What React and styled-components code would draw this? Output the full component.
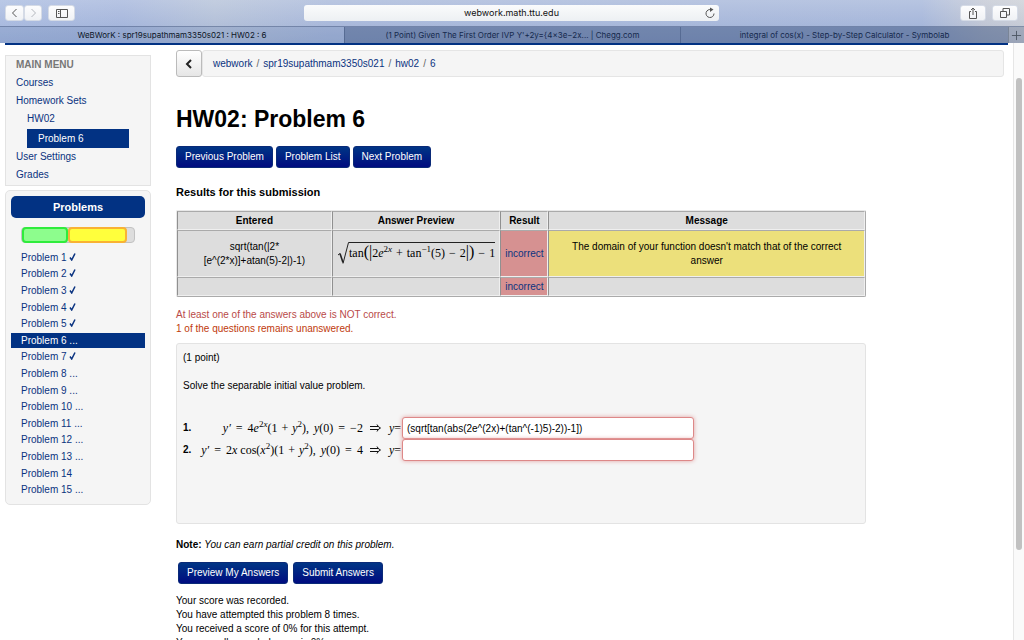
import React from "react";
import styled, { createGlobalStyle, css } from "styled-components";

const navy = "#023283";
const link = "#0a3380";

const GlobalStyle = createGlobalStyle`
  * {
    box-sizing: border-box;
  }
  body {
    margin: 0;
    background: #fff;
    color: #000;
    font-family: "Liberation Sans", Arial, sans-serif;
    font-size: 10px;
    line-height: 14px;
  }
  a {
    color: ${link};
    text-decoration: none;
  }
`;

const Window = styled.div`
  display: flex;
  flex-direction: column;
  height: 100vh;
  overflow: hidden;
`;

const Chrome = styled.header`
  flex: none;
  font-family: Inter, sans-serif;
  background: linear-gradient(rgba(255, 255, 255, 0.2), rgba(80, 110, 180, 0.12)),
    linear-gradient(
      90deg,
      #a9bbe0 0%,
      #a5b6dc 12%,
      #b4c1d8 21%,
      #a8b8da 32%,
      #a5b6da 90%,
      #c3c8d4 96%,
      #cccfd6 100%
    );
`;

const Toolbar = styled.div`
  display: grid;
  grid-template-columns: 1fr 41% 1fr;
  align-items: center;
  height: 26px;
  padding: 0 6px 0 5px;
`;

const ToolGroup = styled.div`
  display: flex;
  gap: ${props => props.gap || 0}px;
  justify-content: ${props => props.align || "flex-start"};
`;

const ToolButton = styled.button`
  display: flex;
  align-items: center;
  justify-content: center;
  width: ${props => props.w}px;
  height: 16px;
  padding: 0;
  color: ${props => (props.faded ? "#b4b8be" : "#555")};
  background: linear-gradient(#fdfdfe, #f0f2f5);
  border: 1px solid #d5dbe6;
  border-radius: 3px;
`;

const SidebarButton = styled(ToolButton)`
  margin-left: 6px;
`;

const AddressBar = styled.div`
  display: flex;
  align-items: center;
  height: 16px;
  padding: 0 3px 0 15px;
  color: #555;
  background: linear-gradient(#fafbfc, #edf0f3);
  border-radius: 3px;
`;

const Address = styled.input`
  flex: 1;
  min-width: 0;
  height: 14px;
  padding: 0;
  border: 0;
  background: none;
  color: #111;
  text-align: center;
  font: 9px/14px Inter, sans-serif;
`;

const Tabs = styled.nav`
  display: grid;
  grid-template-columns: 344fr 336fr 328fr 16px;
  grid-template-rows: 16px;
  height: 17px;
  border-top: 1px solid rgba(60, 80, 120, 0.5);
`;

const Tab = styled.a`
  overflow: hidden;
  text-align: center;
  white-space: nowrap;
  font-size: 8px;
  line-height: 16px;
  color: #15294d;
  background: rgba(50, 75, 120, 0.45);
  border-left: 1px solid rgba(50, 70, 110, 0.4);
  ${props =>
    props.current &&
    css`
      color: #0c1526;
      background: rgba(90, 115, 160, 0.18);
      border-left: 0;
    `}
`;

const NewTab = styled.button`
  display: flex;
  align-items: center;
  justify-content: center;
  padding: 0;
  border: 0;
  border-left: 1px solid #7a8597;
  background: rgba(80, 95, 125, 0.3);
  color: #4c5563;
`;

const Viewport = styled.div`
  flex: 1;
  display: flex;
  min-height: 0;
`;

const Page = styled.div`
  flex: 1;
  display: flex;
  gap: 25px;
  margin: 0 5px;
  padding-right: 4px;
  border-top: 2px solid ${navy};
`;

const ScrollTrack = styled.div`
  width: 11px;
  padding: 35px 2px 0;
  background: #fafafa;
  border-left: 1px solid #e6e6e6;
`;

const ScrollThumb = styled.div`
  height: 84%;
  border-radius: 4px;
  background: #c1c1c1;
`;

const Sidebar = styled.aside`
  flex: none;
  width: 146px;
  padding-top: 10px;
`;

const Menu = styled.ul`
  margin: 0 0 4px;
  padding: 0 0 1px;
  list-style: none;
  line-height: 18px;
  background: #f5f5f5;
  border: 1px solid #e3e3e3;
`;

const MenuTitle = styled.li`
  padding-left: 10px;
  font-weight: bold;
  color: #777;
`;

const MenuItem = styled.li`
  padding-left: ${props => (props.nested ? 21 : 10)}px;
`;

const MenuCurrent = styled.li`
  margin: 1px 21px 0;
  padding-left: 11px;
  line-height: 19px;
  background: ${navy};
  a {
    color: #fff;
  }
`;

const Problems = styled.section`
  padding: 5px 5px 6px;
  background: #f5f5f5;
  border: 1px solid #e3e3e3;
  border-radius: 5px;
`;

const ProblemsTitle = styled.h2`
  margin: 0 0 9px;
  border-radius: 5px;
  background: ${navy};
  color: #fff;
  text-align: center;
  font-size: 11px;
  line-height: 22px;
`;

const Progress = styled.div`
  display: flex;
  height: 16px;
  margin: 0 10px 6px;
  border: 1px solid #c2c2c2;
  border-radius: 4px;
  background: #ddd;
`;

const ProgressPart = styled.div`
  margin: -1px 0;
  border: 2px solid ${props => props.edge};
  border-radius: 4px;
  background: ${props => props.fill};
`;

const ProblemList = styled.ul`
  display: grid;
  grid-auto-rows: 1fr;
  align-items: center;
  height: 249px;
  margin: 0;
  padding: 0;
  list-style: none;
`;

const ProblemItem = styled.li`
  padding-left: 10px;
  line-height: 15px;
  background: ${props => (props.current ? navy : "none")};
  a {
    color: ${props => (props.current ? "#fff" : link)};
  }
`;

const Tick = styled.svg`
  width: 7px;
  height: 8px;
`;

const Main = styled.main`
  flex: 1;
  min-width: 0;
  padding-top: 5px;
`;

const TopRow = styled.div`
  display: flex;
  height: 27px;
`;

const BackButton = styled.button`
  display: flex;
  align-items: center;
  justify-content: center;
  width: 26px;
  padding: 0;
  color: #222;
  background: linear-gradient(#fff, #e6e6e6);
  border: 1px solid #bbb;
  border-radius: 3px;
`;

const Breadcrumb = styled.nav`
  flex: 1;
  display: flex;
  gap: 4px;
  padding-left: 10px;
  line-height: 25px;
  color: #666;
  background: #f5f5f5;
  border: 1px solid #e5e5e5;
  border-radius: 3px;
`;

const Body = styled.div`
  width: 83.33%;
`;

const Title = styled.h1`
  margin: 27px 0 12px;
  font-size: 23px;
  line-height: 30px;
`;

const Buttons = styled.div`
  display: flex;
  gap: ${props => props.gap}px;
  padding-left: ${props => props.indent || 0}px;
`;

const Button = styled.button`
  height: 22px;
  padding: 0 8px;
  color: #fff;
  font: inherit;
  background: linear-gradient(#003585, #000c80);
  border: 1px solid #0a2a78;
  border-radius: 3px;
`;

const Subtitle = styled.h3`
  margin: 17px 0 11px;
  font-size: 11px;
  line-height: 14px;
`;

const Results = styled.table`
  width: 100%;
  table-layout: fixed;
  border-spacing: 0;
  border: 1px solid;
  border-color: #e8e8e8 #aaa #aaa #e8e8e8;
  border-radius: 2px;
  background: #ddd;
  text-align: center;
`;

const cell = css`
  border: 1px solid;
  border-color: #aaa #efefef #efefef #909090;
`;

const HeadCell = styled.th`
  ${cell}
  height: 19px;
  padding: 0;
`;

const Cell = styled.td`
  ${cell}
  height: ${props => (props.tall ? 47 : 19)}px;
  padding: 0 ${props => props.inset || 0}px;
  background: ${props => props.fill || "none"};
`;

const Message = styled.p`
  margin: 0;
  color: ${props => props.tone};
`;

const Messages = styled.div`
  margin: 11px 0 7px;
`;

const ProblemBox = styled.section`
  min-height: 181px;
  padding: 7px 6px;
  background: #f5f5f5;
  border: 1px solid #e3e3e3;
  border-radius: 3px;
`;

const Prompt = styled.p`
  margin: 14px 0 24px;
`;

const Equations = styled.div`
  display: grid;
  grid-template-columns: 11px 206px minmax(0, 292px);
  align-items: center;
  column-gap: 1px;
  grid-auto-rows: 22px;
`;

const Equation = styled.label`
  display: flex;
  justify-content: flex-end;
  align-items: baseline;
  gap: 5px;
  white-space: nowrap;
  font: 12px/20px "Liberation Serif", serif;
  sup {
    font-size: 9px;
    line-height: 0;
  }
`;

const Operator = styled.span`
  margin: 0 1px;
`;

const Unknown = styled.span`
  margin-left: 3px;
`;

const Arrow = styled.svg`
  width: 11px;
  height: 8px;
  margin-left: 2px;
`;

const Answer = styled.input`
  width: 100%;
  height: 22px;
  padding: 0 4px;
  color: #000;
  font: inherit;
  background: #fff;
  border: 1px solid #d88;
  border-radius: 3px;
  box-shadow: 0 0 4px #e3a0a0;
`;

const Root = styled.span`
  display: flex;
  justify-content: center;
  height: 28px;
`;

const RootSign = styled.svg`
  flex: none;
  width: 12px;
  height: 25px;
`;

const Radicand = styled.span`
  height: 24px;
  margin-top: 2px;
  border-top: 1px solid #222;
  white-space: nowrap;
  font: 12px/20px "Liberation Serif", serif;
  sup {
    font-size: 9px;
    line-height: 0;
  }
`;

const Big = styled.span`
  font-size: 16px;
  line-height: 0;
`;

const Note = styled.p`
  margin: 14px 0 10px;
`;

const Score = styled.div`
  margin-top: 10px;
`;

const problems = [
  "done", "done", "done", "done", "done", "open", "done", "open",
  "open", "open", "open", "open", "open", "none", "open"
];

const Icon = ({ size = 12, children }) => (
  <svg
    width={size}
    height={size}
    viewBox="0 0 12 12"
    fill="none"
    stroke="currentColor"
    strokeWidth="1"
    aria-hidden="true"
  >
    {children}
  </svg>
);

const Implies = () => (
  <Arrow viewBox="0 0 11 8" fill="none" stroke="#111">
    <path d="M0 2.5H8.5M0 5.5H8.5M7 0.5Q8 3 10.5 4Q8 5 7 7.5" />
  </Arrow>
);

const BrowserChrome = () => (
  <Chrome>
    <Toolbar>
      <ToolGroup>
        <ToolButton w={19} aria-label="Back">
          <Icon><path d="M7.5 2L3.5 6l4 4" /></Icon>
        </ToolButton>
        <ToolButton w={18} faded={1} aria-label="Forward">
          <Icon><path d="M4.5 2l4 4l-4 4" /></Icon>
        </ToolButton>
        <SidebarButton w={27} aria-label="Show sidebar">
          <Icon><path d="M0.5 2.5h11v8h-11zM4.5 2.5v8M2 4.5h1.5M2 6.5h1.5" /></Icon>
        </SidebarButton>
      </ToolGroup>
      <AddressBar>
        <Address aria-label="Address" defaultValue="webwork.math.ttu.edu" />
        <Icon>
          <path d="M7.5 2.8A4 4 0 1 0 10 6.5" />
          <path d="M6 0.5L9.5 2.5L6 5z" fill="currentColor" stroke="none" />
        </Icon>
      </AddressBar>
      <ToolGroup gap={6} align="flex-end">
        <ToolButton w={26} aria-label="Share">
          <Icon><path d="M4 4.5H2.5v7h7v-7H8M6 8V1M4 3l2-2l2 2" /></Icon>
        </ToolButton>
        <ToolButton w={26} aria-label="Show all tabs">
          <Icon><path d="M1.5 4.5h6v6h-6zM4 4.5v-3h6.5v6.5H7.5" /></Icon>
        </ToolButton>
      </ToolGroup>
    </Toolbar>
    <Tabs>
      <Tab href="#webwork" current={1}>WeBWorK : spr19supathmam3350s021 : HW02 : 6</Tab>
      <Tab href="#chegg">(1 Point) Given The First Order IVP Y'+2y={"{"}4x3e−2x... | Chegg.com</Tab>
      <Tab href="#symbolab">integral of cos(x) - Step-by-Step Calculator - Symbolab</Tab>
      <NewTab aria-label="New tab">
        <Icon size={11}><path d="M6 1v10M1 6h10" /></Icon>
      </NewTab>
    </Tabs>
  </Chrome>
);

const SideNav = () => (
  <Sidebar>
    <Menu>
      <MenuTitle>MAIN MENU</MenuTitle>
      <MenuItem><a href="#courses">Courses</a></MenuItem>
      <MenuItem><a href="#sets">Homework Sets</a></MenuItem>
      <MenuItem nested={1}><a href="#hw02">HW02</a></MenuItem>
      <MenuCurrent><a href="#p6">Problem 6</a></MenuCurrent>
      <MenuItem><a href="#settings">User Settings</a></MenuItem>
      <MenuItem><a href="#grades">Grades</a></MenuItem>
    </Menu>
    <Problems>
      <ProblemsTitle>Problems</ProblemsTitle>
      <Progress>
        <ProgressPart edge="#2fec3c" fill="#8dfd8d" style={{ width: "41%" }} />
        <ProgressPart edge="#f9b233" fill="#ffff3c" style={{ width: "53%" }} />
      </Progress>
      <ProblemList>
        {problems.map((status, i) => (
          <ProblemItem key={i} current={i === 5 ? 1 : 0}>
            <a href={`#p${i + 1}`}>
              Problem {i + 1}
              {status === "open" && " ..."}
              {status === "done" && " "}
              {status === "done" && (
                <Tick viewBox="0 0 7 8" fill="none" stroke={link} strokeWidth="1.5">
                  <path d="M1 4.5L2.7 7L6 0.5" />
                </Tick>
              )}
            </a>
          </ProblemItem>
        ))}
      </ProblemList>
    </Problems>
  </Sidebar>
);

const ResultsTable = () => (
  <Results>
    <colgroup>
      <col width="22.5%" />
      <col width="24.5%" />
      <col width="7%" />
      <col width="46%" />
    </colgroup>
    <thead>
      <tr>
        <HeadCell>Entered</HeadCell>
        <HeadCell>Answer Preview</HeadCell>
        <HeadCell>Result</HeadCell>
        <HeadCell>Message</HeadCell>
      </tr>
    </thead>
    <tbody>
      <tr>
        <Cell tall={1}>
          sqrt(tan(|2*
          <br />
          [e^(2*x)]+atan(5)-2|)-1)
        </Cell>
        <Cell tall={1}>
          <Root>
            <RootSign viewBox="0 0 12 25" fill="none" stroke="#222">
              <path d="M1 15L3 13.5" />
              <path d="M3 13.5L6 22.5" strokeWidth="1.6" />
              <path d="M6 23.5L11.5 2.5H12" />
            </RootSign>
            <Radicand>
              tan<Big>(</Big><Big>|</Big>2<i>e</i>
              <sup>2<i>x</i></sup> <Operator>+</Operator> tan<sup>−1</sup>(5){" "}
              <Operator>−</Operator> 2<Big>|</Big>
              <Big>)</Big> <Operator>−</Operator> 1
            </Radicand>
          </Root>
        </Cell>
        <Cell fill="#d69191"><a href="#ans1">incorrect</a></Cell>
        <Cell fill="#ece07b" inset={12}>
          The domain of your function doesn't match that of the correct answer
        </Cell>
      </tr>
      <tr>
        <Cell />
        <Cell />
        <Cell fill="#d69191"><a href="#ans2">incorrect</a></Cell>
        <Cell />
      </tr>
    </tbody>
  </Results>
);

const App = () => (
  <Window>
    <GlobalStyle />
    <BrowserChrome />
    <Viewport>
      <Page>
        <SideNav />
        <Main>
          <TopRow>
            <BackButton aria-label="Previous page">
              <Icon><path d="M8 2L4 6l4 4" strokeWidth="2" /></Icon>
            </BackButton>
            <Breadcrumb>
              <a href="#webwork">webwork</a>/
              <a href="#course">spr19supathmam3350s021</a>/
              <a href="#hw02">hw02</a>/
              <a href="#p6">6</a>
            </Breadcrumb>
          </TopRow>
          <Body>
            <Title>HW02: Problem 6</Title>
            <Buttons gap={3}>
              <Button>Previous Problem</Button>
              <Button>Problem List</Button>
              <Button>Next Problem</Button>
            </Buttons>
            <Subtitle>Results for this submission</Subtitle>
            <ResultsTable />
            <Messages>
              <Message tone="#b94a48">At least one of the answers above is NOT correct.</Message>
              <Message tone="#c03a0c">1 of the questions remains unanswered.</Message>
            </Messages>
            <ProblemBox>
              <div>(1 point)</div>
              <Prompt>Solve the separable initial value problem.</Prompt>
              <Equations>
                <b>1.</b>
                <Equation htmlFor="ans1">
                  <i>y′</i>
                  <span>=</span>
                  <span>
                    4<i>e</i><sup>2<i>x</i></sup>(1 <Operator>+</Operator> <i>y</i><sup>2</sup>),
                  </span>
                  <span><i>y</i>(0)</span>
                  <span>=</span>
                  <span>−2</span>
                  <Implies />
                  <Unknown><i>y</i>=</Unknown>
                </Equation>
                <Answer id="ans1" defaultValue="(sqrt[tan(abs(2e^(2x)+(tan^(-1)5)-2))-1])" />
                <b>2.</b>
                <Equation htmlFor="ans2">
                  <i>y′</i>
                  <span>=</span>
                  <span>
                    2<i>x</i> cos(<i>x</i><sup>2</sup>)(1 <Operator>+</Operator> <i>y</i><sup>2</sup>),
                  </span>
                  <span><i>y</i>(0)</span>
                  <span>=</span>
                  <span>4</span>
                  <Implies />
                  <Unknown><i>y</i>=</Unknown>
                </Equation>
                <Answer id="ans2" />
              </Equations>
            </ProblemBox>
            <Note>
              <b>Note:</b> <i>You can earn partial credit on this problem.</i>
            </Note>
            <Buttons gap={5} indent={2}>
              <Button>Preview My Answers</Button>
              <Button>Submit Answers</Button>
            </Buttons>
            <Score>
              Your score was recorded.
              <br />
              You have attempted this problem 8 times.
              <br />
              You received a score of 0% for this attempt.
              <br />
              Your overall recorded score is 0%.
            </Score>
          </Body>
        </Main>
      </Page>
      <ScrollTrack>
        <ScrollThumb />
      </ScrollTrack>
    </Viewport>
  </Window>
);

export default App;
